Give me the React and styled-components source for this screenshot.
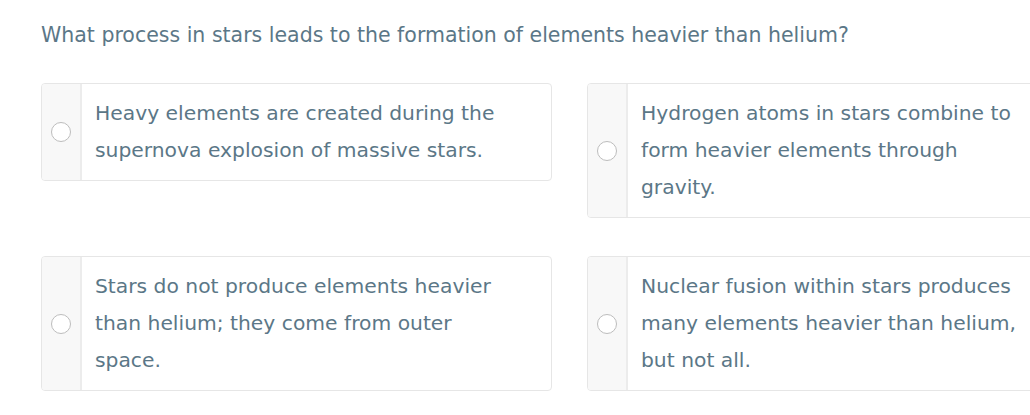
import React from "react";
import styled, { createGlobalStyle } from "styled-components";

const GlobalStyle = createGlobalStyle`
    body {
        margin: 0;
        background: #ffffff;
        overflow: hidden;
        font-family: "DejaVu Sans", "Noto Sans", sans-serif;
    }
`;

const Page = styled.div`
    padding: 20px 0 0 41px;
    width: 1057px;
`;

const Question = styled.h2`
    margin: 0 0 33px;
    font-size: 20.5px;
    font-weight: 400;
    line-height: 30px;
    color: #5b7787;
`;

const Choices = styled.div`
    display: grid;
    grid-template-columns: 511px 480px;
    column-gap: 35px;
    row-gap: 38px;
    align-items: start;
`;

const Choice = styled.label`
    display: flex;
    border: 1px solid #e6e6e6;
    border-radius: 4px;
    background: #ffffff;
    overflow: hidden;
    cursor: pointer;
`;

const RadioCell = styled.div`
    width: 38px;
    flex: none;
    display: flex;
    align-items: center;
    justify-content: center;
    background: #f8f8f8;
    border-right: 2px solid #ececec;
`;

const Radio = styled.span`
    width: 20px;
    height: 20px;
    border-radius: 50%;
    border: 1px solid #bdbdbd;
    background: #ffffff;
    box-sizing: border-box;
`;

const ChoiceText = styled.div`
    padding: 11px 38px 11px 13px;
    font-size: 20.3px;
    line-height: 37px;
    color: #5b7787;
`;

const answers = [
    "Heavy elements are created during the supernova explosion of massive stars.",
    "Hydrogen atoms in stars combine to form heavier elements through gravity.",
    "Stars do not produce elements heavier than helium; they come from outer space.",
    "Nuclear fusion within stars produces many elements heavier than helium, but not all.",
];

const App = () => {
    return (
        <Page>
            <GlobalStyle />
            <Question>
                What process in stars leads to the formation of elements heavier than helium?
            </Question>
            <Choices>
                {answers.map(answer => (
                    <Choice key={answer}>
                        <RadioCell>
                            <Radio />
                        </RadioCell>
                        <ChoiceText>{answer}</ChoiceText>
                    </Choice>
                ))}
            </Choices>
        </Page>
    );
};

export default App;
